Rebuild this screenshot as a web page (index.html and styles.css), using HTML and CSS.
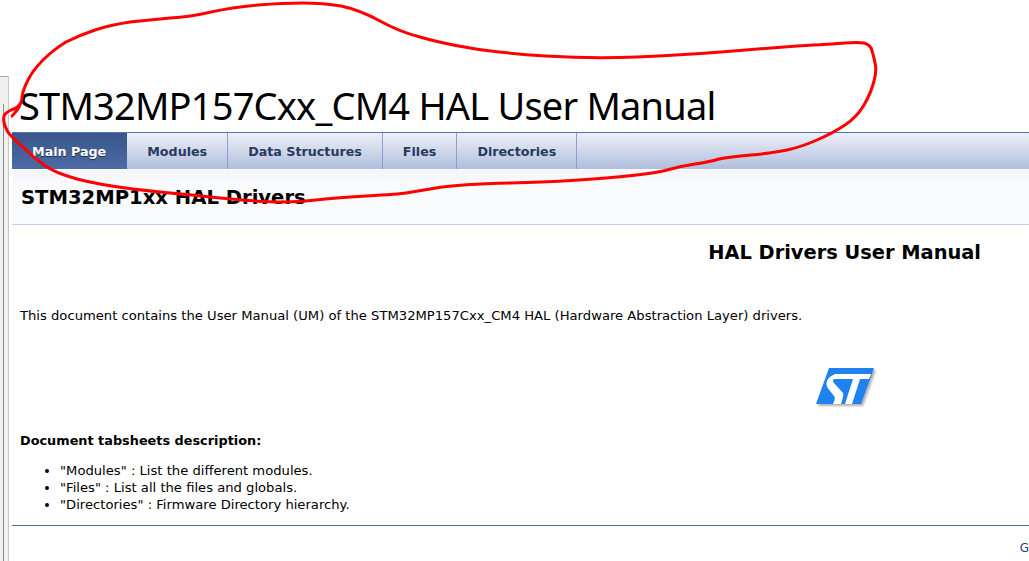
FILE: index.html
```html
<!DOCTYPE html>
<html lang="en">
<head>
    <meta charset="UTF-8">
    <title>STM32MP157Cxx_CM4 HAL User Manual</title>
    <link rel="stylesheet" href="styles.css">
</head>
<body>
<div class="frame">
    <div class="gutter"><div class="gutter-line"></div></div>
    <div class="page">
        <div class="project">STM32MP157Cxx_CM4 HAL User Manual</div>
        <div class="tabs">
            <a class="tab current" href="#">Main Page</a>
            <a class="tab" href="#">Modules</a>
            <a class="tab" href="#">Data Structures</a>
            <a class="tab" href="#">Files</a>
            <a class="tab" href="#">Directories</a>
        </div>
        <div class="header">STM32MP1xx HAL Drivers</div>
        <div class="contents">
            <h1>HAL Drivers User Manual</h1>
            <p class="intro">This document contains the User Manual (UM) of the STM32MP157Cxx_CM4 HAL (Hardware Abstraction Layer) drivers.</p>
            <div class="logo">
                <svg width="64" height="40" viewBox="0 0 64 40">
                    <polygon class="logo-blue" points="15,2 60,2 47,38 2,38"/>
                    <path class="logo-white" d="M21 8 L57 8 L55 13 L46 13 L38 38 L31 38 L39 13 L20 13 Q18 15 20 17 L29 27 Q30 29 27 38 L19 38 Q22 32 20 30 L13 21 Q10 13 21 8 Z"/>
                </svg>
            </div>
            <p class="tabs-title">Document tabsheets description:</p>
            <ul class="tabs-list">
                <li>"Modules" : List the different modules.</li>
                <li>"Files" : List all the files and globals.</li>
                <li>"Directories" : Firmware Directory hierarchy.</li>
            </ul>
        </div>
        <div class="footer">G</div>
    </div>
</div>
<!-- red pen circle drawn on top of the screenshot -->
<svg class="scribble" width="1029" height="561" viewBox="0 0 1029 561">
    <path d="M12 116 Q18 110 20 105 Q22 100 22.500 95 Q23 90 28 80 Q33 70 43 60 Q53 50 66 42 Q80 35 95 30 Q110 25 130 22 Q150 20 170 18 Q190 17 211 12 Q233 7 258 5 Q283 3 303 3 Q323 3 341 6 Q360 10 380 21 Q400 32 420 37 Q440 43 470 48 Q500 53 546 56 Q593 59 637 57 Q681 55 721 52 Q761 49 797 46 Q833 44 845 43 Q857 42 864 43 Q871 45 872 51 Q874 57 875 63 Q877 70 874 81 Q871 93 864 105 Q857 117 845 125 Q833 133 817 140 Q801 147 787 150 Q773 153 751 155 Q729 157 719 159 Q709 162 695 164 Q681 166 667 170 Q653 174 606 178 Q560 182 510 183 Q460 184 436 188 Q412 192 406 193 Q400 194 366 196 Q333 198 316 200 Q300 202 283 202 Q267 202 242 200 Q217 198 192 195 Q167 193 133 189 Q100 185 77 179 Q55 173 44 165 Q33 157 25 149 Q17 142 12 137 Q7 132 5 126 Q3 120 4 116 Q5 113 11 110 Q18 108 20 104"/>
</svg>
</body>
</html>
```

FILE: styles.css
```css
html, body {
    margin: 0;
    padding: 0;
    height: 561px;
    overflow: hidden;
    background-color: #fff;
}

body {
    font-family: "DejaVu Sans", Verdana, sans-serif;
    font-size: 13.15px;
    color: #000;
    position: relative;
}

.frame {
    display: flex;
    height: 561px;
}

.gutter {
    flex: 0 0 9px;
    box-sizing: border-box;
    margin-top: 76px;
    margin-right: 3px;
    background-color: #f0f0f0;
    border-top: 1px solid #a9a9a9;
    border-right: 1px solid #c8c8c8;
    padding-top: 27px;
    padding-left: 3px;
}

.gutter-line {
    width: 1px;
    height: 100%;
    background-color: #8a8a8a;
}

.page {
    flex: 1;
    min-width: 0;
}

.project {
    height: 132px;
    box-sizing: border-box;
    padding: 82px 0 0 7px;
    font-family: "Noto Sans", sans-serif;
    font-size: 38px;
    letter-spacing: -0.8px;
    line-height: 46px;
}

.tabs {
    display: flex;
    height: 36px;
    border-top: 1px solid #5373b4;
    background: linear-gradient(#eef0f7, #b0bedd);
    font-size: 12.7px;
    font-weight: bold;
}

.tab {
    padding: 1px 20px 0;
    line-height: 36px;
    color: #283a5d;
    text-decoration: none;
    border-right: 1px solid #8aa0cc;
}

.tab.current {
    padding-right: 21px;
    color: #fff;
    background: linear-gradient(#3a5589, #4c6ca6);
    border-right: none;
    text-shadow: 0 1px 1px rgba(0, 0, 0, 0.6);
}

.header {
    margin-top: 1px;
    height: 55px;
    box-sizing: border-box;
    padding: 14px 0 0 9px;
    background: linear-gradient(#f3f5fa, #f9fafc 30%);
    border-bottom: 1px solid #c4cfe5;
    font-size: 19.6px;
    font-weight: bold;
    line-height: 28px;
}

.contents {
    padding: 0 8px;
    height: 300px;
    border-bottom: 1px solid #4a6aaa;
}

/* the original page is wider than the window, so its centred title and logo sit far right */
.contents h1 {
    margin: 0;
    padding: 16px 40px 0 0;
    font-size: 19.4px;
    line-height: 24px;
    text-align: right;
}

.intro {
    margin: 0;
    padding-top: 42px;
    line-height: 17px;
}

.logo {
    display: flex;
    justify-content: flex-end;
    padding: 42px 143px 0 0;
}

.logo-blue {
    fill: #1f82f0;
}

.logo-white {
    fill: #fff;
}

.logo svg {
    display: block;
    filter: blur(0.4px) drop-shadow(2px 2px 1px #b0b0b0);
}

.tabs-title {
    margin: 0;
    padding-top: 26px;
    font-size: 12.85px;
    font-weight: bold;
    line-height: 17px;
}

.tabs-list {
    margin: 13px 0 0;
    padding-left: 40px;
    line-height: 17px;
}

.footer {
    padding-top: 15px;
    font-size: 12px;
    color: #2a3f6f;
    text-align: right;
}

.scribble {
    position: absolute;
    top: 0;
    left: 0;
    fill: none;
    stroke: #f00;
    stroke-width: 3;
    stroke-linecap: round;
    stroke-linejoin: round;
}
```
